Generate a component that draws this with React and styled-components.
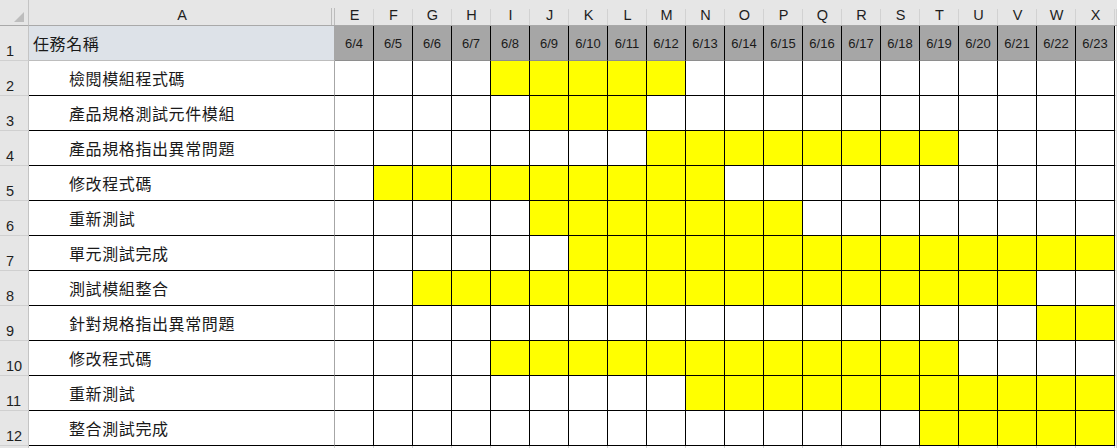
import React from "react";
import styled, { createGlobalStyle, css } from "styled-components";

const dates = [
  "6/4", "6/5", "6/6", "6/7", "6/8", "6/9", "6/10", "6/11", "6/12", "6/13",
  "6/14", "6/15", "6/16", "6/17", "6/18", "6/19", "6/20", "6/21", "6/22", "6/23",
];
const letters = "EFGHIJKLMNOPQRSTUVWX".split("");

// task name, first and last active day (index into dates)
const tasks = [
  ["檢閱模組程式碼", 4, 8],
  ["產品規格測試元件模組", 5, 7],
  ["產品規格指出異常問題", 8, 15],
  ["修改程式碼", 1, 9],
  ["重新測試", 5, 11],
  ["單元測試完成", 6, 19],
  ["測試模組整合", 2, 17],
  ["針對規格指出異常問題", 18, 19],
  ["修改程式碼", 4, 15],
  ["重新測試", 9, 19],
  ["整合測試完成", 15, 19],
];

const GlobalStyle = createGlobalStyle`
  html, body {
    margin: 0;
    padding: 0;
    background: #ffffff;
    overflow: hidden;
  }
  * {
    box-sizing: border-box;
  }
`;

const Sheet = styled.div`
  display: grid;
  grid-template-columns: 29px 306px repeat(20, 39px) 1fr;
  grid-template-rows: 26px repeat(12, 35px) 2px;
  width: 1117px;
  height: 448px;
  overflow: hidden;
  font-family: "Liberation Sans", Arial, sans-serif;
  color: #222;
`;

const headBg = "#e6e6e6";

const Corner = styled.div`
  background: ${headBg};
  border-right: 1px solid #c4c4c4;
  border-bottom: 1px solid #a9a9a9;
  display: flex;
  justify-content: flex-end;
  align-items: flex-end;
  padding: 0 4px 3px 0;
`;

const Triangle = styled.div`
  width: 0;
  height: 0;
  border-left: 10px solid transparent;
  border-bottom: 10px solid #bdbdbd;
`;

const ColHead = styled.div`
  background:
    linear-gradient(#d2d2d2, #d2d2d2) right 0 bottom 0 / 1px 16px no-repeat,
    ${headBg};
  ${({ $hidden }) =>
    $hidden &&
    css`
      background:
        linear-gradient(#bcbcbc, #bcbcbc) right 0 bottom 0 / 1px 17px no-repeat,
        linear-gradient(#bcbcbc, #bcbcbc) right 3px bottom 0 / 1px 17px no-repeat,
        ${headBg};
    `}
  border-bottom: 1px solid #a9a9a9;
  display: flex;
  align-items: flex-end;
  justify-content: center;
  padding-bottom: 3px;
  font-size: 14.5px;
  line-height: 1;
  color: #1e1e1e;
`;

const RowHead = styled.div`
  background: ${headBg};
  border-right: 1px solid #c4c4c4;
  border-bottom: 1px solid #d0d0d0;
  display: flex;
  align-items: flex-end;
  padding: 0 0 2px 6px;
  font-size: 14.5px;
  line-height: 1;
  color: #1e1e1e;
`;

const NameCell = styled.div`
  display: flex;
  align-items: center;
  padding-left: ${({ $title }) => ($title ? "4px" : "40px")};
  background: ${({ $title }) => ($title ? "#dde2e8" : "#ffffff")};
  border-right: 1px solid #a6a6a6;
  border-bottom: 1px solid ${({ $title }) => ($title ? "#bdbdbd" : "#000000")};
  font-family: "Noto Sans CJK TC", "Noto Sans", sans-serif;
  font-size: 16px;
  letter-spacing: 0.6px;
  color: #1a1a1a;
  white-space: nowrap;
`;

const DateCell = styled.div`
  display: flex;
  align-items: center;
  justify-content: center;
  background: #a6a6a6;
  border-right: 1px solid #000000;
  border-bottom: 1px solid #8e8e8e;
  font-size: 13px;
  color: #1a1a1a;
`;

const DayCell = styled.div`
  background: ${({ $on }) => ($on ? "#ffff00" : "#ffffff")};
  border-right: 1px solid #000000;
  border-bottom: 1px solid #000000;
`;

const Blank = styled.div`
  background: #ffffff;
  border-right: 1px solid #d4d4d4;
  border-bottom: 1px solid #d4d4d4;
`;

const Stub = styled.div`
  background: ${({ $head }) => ($head ? headBg : "#ffffff")};
  border-right: 1px solid ${({ $head }) => ($head ? "#c4c4c4" : "#d4d4d4")};
`;

export default function App() {
  return (
    <>
      <GlobalStyle />
      <Sheet>
        <Corner>
          <Triangle />
        </Corner>
        <ColHead $hidden>A</ColHead>
        {letters.map((l) => (
          <ColHead key={l}>{l}</ColHead>
        ))}
        <ColHead />

        <RowHead>1</RowHead>
        <NameCell $title>任務名稱</NameCell>
        {dates.map((d) => (
          <DateCell key={d}>{d}</DateCell>
        ))}
        <Blank />

        {tasks.map(([name, from, to], i) => (
          <React.Fragment key={i}>
            <RowHead>{i + 2}</RowHead>
            <NameCell>{name}</NameCell>
            {dates.map((d, j) => (
              <DayCell key={d} $on={j >= from && j <= to} />
            ))}
            <Blank />
          </React.Fragment>
        ))}

        <Stub $head />
        <Stub />
        {dates.map((d) => (
          <Stub key={d} />
        ))}
        <Stub />
      </Sheet>
    </>
  );
}
